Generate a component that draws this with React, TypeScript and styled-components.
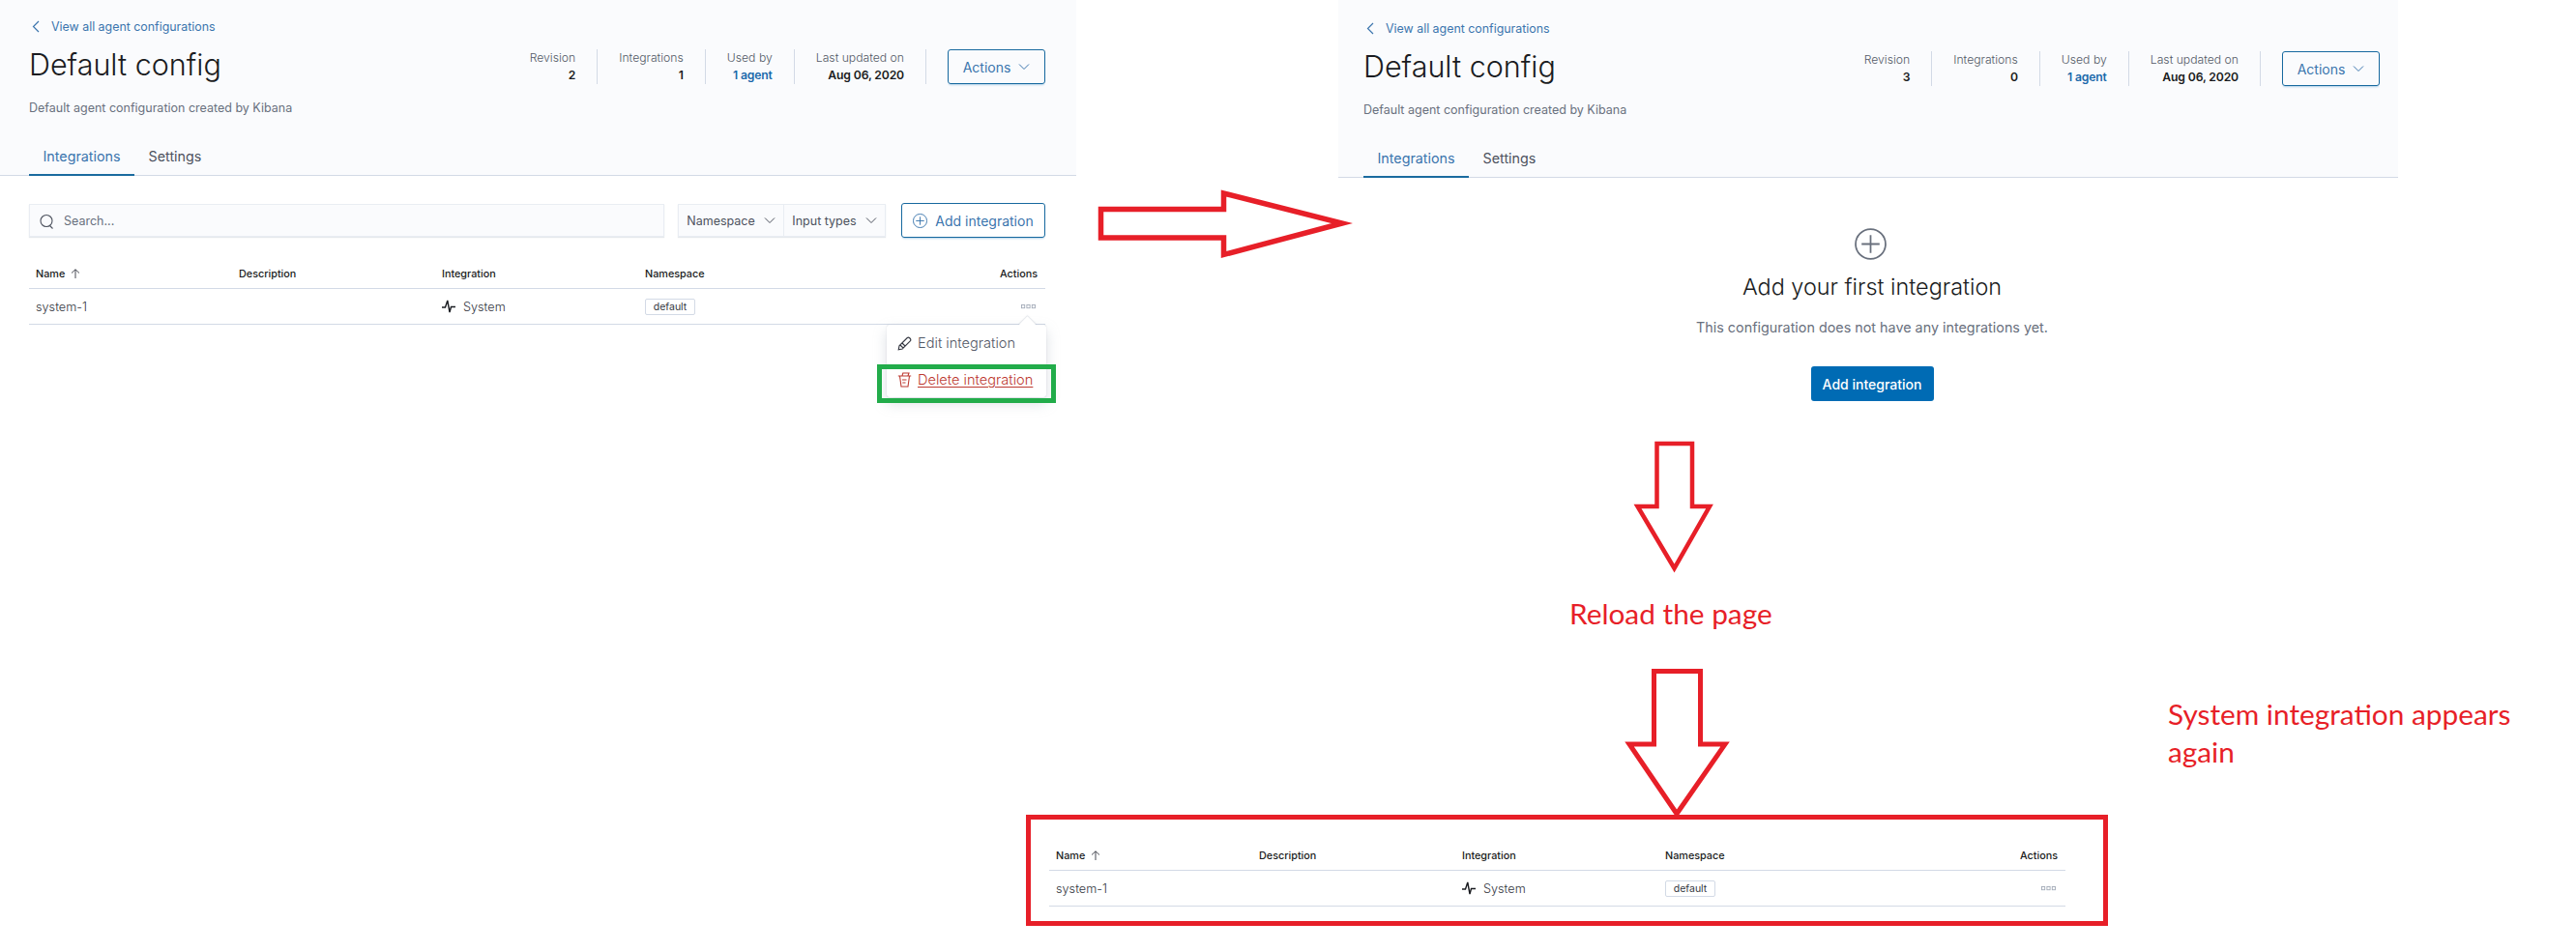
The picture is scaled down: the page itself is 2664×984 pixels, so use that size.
import React from "react";
import styled, { createGlobalStyle } from "styled-components";

const Global = createGlobalStyle`
  html, body { margin: 0; padding: 0; background: #fff; }
  * { box-sizing: border-box; }
  body { font-family: Inter, "Liberation Sans", sans-serif; color: #343741; }
`;

const Canvas = styled.div`
  position: relative;
  width: 2664px;
  height: 984px;
  overflow: hidden;
  background: #fff;
`;

const Place = styled.section<{ $x: number; $y: number; $w: number }>`
  position: absolute;
  left: ${(p) => p.$x}px;
  top: ${(p) => p.$y}px;
  width: ${(p) => p.$w}px;
`;

const HeaderBar = styled.header<{ $w: number; $top: number; $left: number; $right: number }>`
  width: ${(p) => p.$w}px;
  padding: ${(p) => p.$top}px ${(p) => p.$right}px 0 ${(p) => p.$left}px;
  background: #fafbfd;
  border-bottom: 1px solid #d3dae6;
`;
const HeaderTop = styled.div`
  display: flex;
  justify-content: space-between;
  align-items: flex-start;
`;
const TitleBlock = styled.div`
  display: flex;
  flex-direction: column;
`;
const BackLink = styled.a`
  display: flex;
  align-items: center;
  gap: 12px;
  height: 18px;
  font-size: 12.4px;
  color: #3b75ad;
  padding-left: 3px;
`;
const Title = styled.h1`
  margin: 11px 0 0;
  font-size: 30.5px;
  line-height: 40px;
  font-weight: 300;
  color: #1a1c21;
`;
const Description = styled.p`
  margin: 16px 0 0;
  font-size: 12.5px;
  line-height: 18px;
  color: #69707d;
`;
const Stats = styled.div`
  display: flex;
  margin-top: 33px;
`;
const Stat = styled.div`
  display: flex;
  flex-direction: column;
  align-items: flex-end;
  height: 36px;
  padding-right: 22px;
  margin-right: 22px;
  border-right: 1px solid #d3dae6;
  font-size: 12.2px;
  line-height: 17.5px;
`;
const StatLabel = styled.span`
  color: #535966;
  font-weight: 300;
`;
const StatValue = styled.span<{ $link?: boolean }>`
  font-size: 12.2px;
  font-weight: 600;
  letter-spacing: -0.15px;
  color: ${(p) => (p.$link ? "#1a69ab" : "#1a1c21")};
`;
const OutlineButton = styled.button<{ $w: number }>`
  display: flex;
  align-items: center;
  justify-content: center;
  gap: 8px;
  width: ${(p) => p.$w}px;
  height: 36px;
  padding: 0;
  font: inherit;
  font-size: 14px;
  color: #3b75ad;
  background: transparent;
  border: 1px solid #17699f;
  border-radius: 3px;
  box-shadow: 0 2px 2px -1px rgba(0, 107, 180, 0.3);
`;
const Tabs = styled.nav`
  display: flex;
  margin-top: 21px;
  margin-bottom: -1px;
`;
const Tab = styled.div<{ $active?: boolean }>`
  height: 40px;
  padding: 0 14.5px;
  display: flex;
  align-items: center;
  font-size: 14.3px;
  color: ${(p) => (p.$active ? "#3b75ad" : "#4d525e")};
  border-bottom: 2px solid ${(p) => (p.$active ? "#1a6b9f" : "transparent")};
`;

const Toolbar = styled.div`
  display: flex;
  align-items: center;
  height: 36px;
  margin: 28px 32px 0 30px;
`;
const SearchBox = styled.div`
  display: flex;
  align-items: center;
  gap: 10px;
  flex: 1;
  height: 34px;
  padding: 1px 0 0 10px;
  font-size: 12.5px;
  color: #69707d;
  background: #fafbfd;
  border: 1px solid #e9edf3;
  box-shadow: 0 1px 1px rgba(152, 162, 179, 0.25);
`;
const FilterGroup = styled.div`
  display: flex;
  height: 34px;
  margin: 0 16px 0 14px;
  background: #fafbfd;
  border: 1px solid #e9edf3;
  box-shadow: 0 1px 1px rgba(152, 162, 179, 0.25);
`;
const FilterButton = styled.div<{ $w: number }>`
  display: flex;
  align-items: center;
  justify-content: center;
  gap: 9px;
  width: ${(p) => p.$w}px;
  font-size: 12.5px;
  color: #4d525e;
  & + & {
    border-left: 1px solid #e9edf3;
  }
`;

const TableWrap = styled.div<{ $top: number }>`
  position: relative;
  width: 1051px;
  margin: ${(p) => p.$top}px 0 0 30px;
`;
const PlainTable = styled.div`
  position: relative;
  width: 1051px;
`;
const Row = styled.div<{ $h: number }>`
  display: grid;
  grid-template-columns: 210px 210px 210px 1fr 100px;
  align-items: center;
  height: ${(p) => p.$h}px;
  border-bottom: 1px solid #d3dae6;
`;
const HeadCell = styled.div<{ $right?: boolean }>`
  display: flex;
  align-items: center;
  gap: 6px;
  padding: 1px 8px 0 7px;
  justify-content: ${(p) => (p.$right ? "flex-end" : "flex-start")};
  font-size: 10.8px;
  font-weight: 500;
  color: #1a1c21;
`;
const Cell = styled.div<{ $right?: boolean }>`
  display: flex;
  align-items: center;
  gap: 8px;
  padding: 0 8px 0 7px;
  justify-content: ${(p) => (p.$right ? "flex-end" : "flex-start")};
  font-size: 12.7px;
  font-weight: 300;
  color: #343741;
`;
const Badge = styled.span`
  display: inline-flex;
  align-items: center;
  justify-content: center;
  width: 52px;
  height: 17px;
  font-size: 10.5px;
  font-weight: 400;
  color: #343741;
  background: #fff;
  border: 1px solid #d3dae6;
  border-radius: 2px;
`;
const DotsSlot = styled.span`
  display: flex;
  margin-right: 2px;
`;

const Popover = styled.div`
  position: absolute;
  left: 887px;
  top: 69px;
  width: 165px;
  height: 75px;
  background: #fff;
  border-radius: 3px;
  box-shadow: 0 0 1px rgba(152, 162, 179, 0.6), 0 6px 14px rgba(152, 162, 179, 0.35);
  &::before {
    content: "";
    position: absolute;
    top: -6px;
    left: 139px;
    width: 13px;
    height: 13px;
    background: #fff;
    transform: rotate(45deg);
    box-shadow: -1px -1px 1px rgba(152, 162, 179, 0.25);
  }
`;
const MenuItem = styled.div<{ $danger?: boolean }>`
  position: relative;
  display: flex;
  align-items: center;
  gap: 6px;
  height: 38px;
  padding-left: 11px;
  font-size: 14.6px;
  font-weight: 300;
  color: ${(p) => (p.$danger ? "#bd3a32" : "#535966")};
  text-decoration: ${(p) => (p.$danger ? "underline" : "none")};
  text-underline-offset: 2px;
`;

const EmptyState = styled.div`
  display: flex;
  flex-direction: column;
  align-items: center;
  width: 1104px;
  padding-top: 52px;
`;
const EmptyIcon = styled.div`
  display: flex;
  margin-right: 3px;
`;
const EmptyTitle = styled.h2`
  margin: 12px 0 0;
  font-size: 23.4px;
  line-height: 32px;
  font-weight: 300;
  color: #1a1c21;
`;
const EmptyText = styled.p`
  margin: 16px 0 0;
  font-size: 14.35px;
  line-height: 20px;
  color: #69707d;
`;
const PrimaryButton = styled.button`
  width: 127px;
  height: 36px;
  margin-top: 30px;
  padding: 0;
  font: inherit;
  font-size: 14px;
  font-weight: 500;
  color: #fff;
  background: #006bb4;
  border: none;
  border-radius: 3px;
`;

const Overlay = styled.svg`
  position: absolute;
  left: 0;
  top: 0;
  pointer-events: none;
`;
const Note = styled.div<{ $x: number; $y: number }>`
  position: absolute;
  left: ${(p) => p.$x}px;
  top: ${(p) => p.$y}px;
  font-family: Lato, "Open Sans", sans-serif;
  font-size: 29.8px;
  line-height: 39px;
  color: #e71f28;
`;

const Chevron = () => (
  <svg width="12" height="12" viewBox="0 0 12 12" fill="none" stroke="currentColor" strokeWidth="1">
    <path d="M1 3.5 L6 8.5 L11 3.5" />
  </svg>
);
const BackIcon = () => (
  <svg width="8" height="13" viewBox="0 0 8 13" fill="none" stroke="#3b75ad" strokeWidth="1.2">
    <path d="M7 1 L1.5 6.5 L7 12" />
  </svg>
);
const SearchIcon = () => (
  <svg width="15" height="16" viewBox="0 0 15 16" fill="none" stroke="#4d525e" strokeWidth="1.1">
    <circle cx="7" cy="7.5" r="6" />
    <path d="M10.5 12.5 L13.5 15.5" />
  </svg>
);
const PlusCircle = ({ size, color, width }: { size: number; color: string; width: number }) => (
  <svg width={size} height={size} viewBox="0 0 32 32" fill="none" stroke={color} strokeWidth={width}>
    <circle cx="16" cy="16" r="15" />
    <path d="M16 7 V25 M7 16 H25" />
  </svg>
);
const SortUp = () => (
  <svg width="10" height="10" viewBox="0 0 10 10" fill="none" stroke="#343741" strokeWidth="0.9">
    <path d="M1 4.5 L5 0.8 L9 4.5 M5 0.8 V10" />
  </svg>
);
const PulseIcon = () => (
  <svg width="14" height="14" viewBox="0 0 14 14" fill="none" stroke="#1a1c21" strokeWidth="1.4">
    <path d="M0 8 H3.5 L5.8 1 L8 13 L9.5 7.5 H14" />
  </svg>
);
const Dots = () => (
  <svg width="15" height="5" viewBox="0 0 15 5" fill="none" stroke="#a3abb8" strokeWidth="0.9">
    <rect x="0.5" y="0.5" width="3.2" height="3.2" />
    <rect x="5.9" y="0.5" width="3.2" height="3.2" />
    <rect x="11.3" y="0.5" width="3.2" height="3.2" />
  </svg>
);
const PencilIcon = () => (
  <svg width="15" height="15" viewBox="0 0 15 15" fill="none" stroke="#343741" strokeWidth="1.1">
    <path d="M1.2 13.8 L2 9.8 L10.3 1.5 Q11.5 0.6 13 2 Q14.4 3.5 13.5 4.7 L5.2 13 Z M3 9 L6 12 M5 7 L8 10" />
  </svg>
);
const TrashIcon = () => (
  <svg width="15" height="16" viewBox="0 0 15 16" fill="none" stroke="#bd3a32" strokeWidth="1.1">
    <path d="M0.8 4 H14.2 M5 3.8 L5.8 1 H12 L11 3.8 M2.5 4 L4 15 H11 L12.5 4 M5 8 H9.5 M5.3 11 H8.5" />
  </svg>
);

type Cfg = { revision: number; count: number };

const ConfigHeader = ({
  w,
  top,
  left,
  right,
  revision,
  count,
}: Cfg & { w: number; top: number; left: number; right: number }) => (
  <HeaderBar $w={w} $top={top} $left={left} $right={right}>
    <HeaderTop>
      <TitleBlock>
        <BackLink>
          <BackIcon />
          View all agent configurations
        </BackLink>
        <Title>Default config</Title>
        <Description>Default agent configuration created by Kibana</Description>
      </TitleBlock>
      <Stats>
        <Stat>
          <StatLabel>Revision</StatLabel>
          <StatValue>{revision}</StatValue>
        </Stat>
        <Stat>
          <StatLabel>Integrations</StatLabel>
          <StatValue>{count}</StatValue>
        </Stat>
        <Stat>
          <StatLabel>Used by</StatLabel>
          <StatValue $link>1 agent</StatValue>
        </Stat>
        <Stat>
          <StatLabel>Last updated on</StatLabel>
          <StatValue>Aug 06, 2020</StatValue>
        </Stat>
        <OutlineButton $w={101}>
          Actions
          <Chevron />
        </OutlineButton>
      </Stats>
    </HeaderTop>
    <Tabs>
      <Tab $active>Integrations</Tab>
      <Tab>Settings</Tab>
    </Tabs>
  </HeaderBar>
);

const TableRows = () => (
  <>
    <Row $h={32}>
      <HeadCell>
        Name <SortUp />
      </HeadCell>
      <HeadCell>Description</HeadCell>
      <HeadCell>Integration</HeadCell>
      <HeadCell>Namespace</HeadCell>
      <HeadCell $right>Actions</HeadCell>
    </Row>
    <Row $h={37}>
      <Cell>system-1</Cell>
      <Cell />
      <Cell>
        <PulseIcon />
        System
      </Cell>
      <Cell>
        <Badge>default</Badge>
      </Cell>
      <Cell $right>
        <DotsSlot>
          <Dots />
        </DotsSlot>
      </Cell>
    </Row>
  </>
);

export default function App() {
  return (
    <Canvas>
      <Global />
      <Place $x={0} $y={0} $w={1113}>
        <ConfigHeader w={1113} top={18} left={30} right={32} revision={2} count={1} />
        <Toolbar>
          <SearchBox>
            <SearchIcon />
            Search...
          </SearchBox>
          <FilterGroup>
            <FilterButton $w={108}>
              Namespace
              <Chevron />
            </FilterButton>
            <FilterButton $w={105}>
              Input types
              <Chevron />
            </FilterButton>
          </FilterGroup>
          <OutlineButton $w={149}>
            <PlusCircle size={15} color="#3b75ad" width={2} />
            Add integration
          </OutlineButton>
        </Toolbar>
        <TableWrap $top={21}>
          <TableRows />
          <Popover>
            <MenuItem>
              <PencilIcon />
              Edit integration
            </MenuItem>
            <MenuItem $danger>
              <TrashIcon />
              Delete integration
            </MenuItem>
          </Popover>
        </TableWrap>
      </Place>

      <Place $x={1384} $y={0} $w={1104}>
        <ConfigHeader w={1096} top={20} left={26} right={19} revision={3} count={0} />
        <EmptyState>
          <EmptyIcon>
            <PlusCircle size={33} color="#69707d" width={1.7} />
          </EmptyIcon>
          <EmptyTitle>Add your first integration</EmptyTitle>
          <EmptyText>This configuration does not have any integrations yet.</EmptyText>
          <PrimaryButton>Add integration</PrimaryButton>
        </EmptyState>
      </Place>

      <Place $x={1085} $y={869} $w={1051}>
        <PlainTable>
          <TableRows />
        </PlainTable>
      </Place>

      <Overlay width="2664" height="984" viewBox="0 0 2664 984" fill="none" stroke="#e71f28">
        <path strokeWidth="5.5" d="M1138.5 216.5 H1265.5 V200 L1388 231 L1265.5 263.5 V246 H1138.5 Z" />
        <path strokeWidth="4.5" d="M1713.5 459 H1750 V524 H1768 L1731.5 588 L1693.5 524 H1713.5 Z" />
        <path strokeWidth="5" d="M1710.5 694.5 H1758.5 V770 H1784 L1734 842 L1685 770 H1710.5 Z" />
        <rect x="1063.5" y="845.5" width="1114" height="110" strokeWidth="5" />
        <rect x="909.5" y="379.5" width="180" height="35" strokeWidth="5" stroke="#22ac4a" />
      </Overlay>

      <Note $x={1623} $y={615}>Reload the page</Note>
      <Note $x={2242} $y={719}>
        System integration appears
        <br />
        again
      </Note>
    </Canvas>
  );
}
